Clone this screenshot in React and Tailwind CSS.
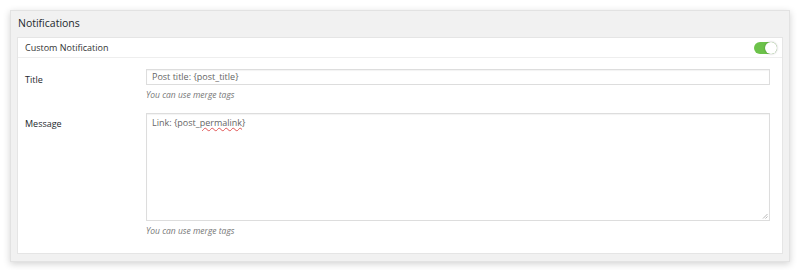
export default function App() {
  return (
    <div className="w-[800px] h-[270px] bg-white p-[10px] font-['Open_Sans','Noto_Sans',sans-serif]">
      <div className="bg-[#f1f1f1] border border-[#e2e2e2] shadow-[0_2px_7px_rgba(0,0,0,0.18)] px-[6px] pb-[7px]">
        <div className="h-[26px] flex items-center pl-[1px] text-[10.5px] text-[#23282d]">Notifications</div>
        <div className="bg-white border border-[#e5e5e5]">
          <div className="h-[20px] flex items-center justify-between pl-[7px] pr-[5px] border-b border-[#eeeeee]">
            <span className="text-[9px] text-[#333]">Custom Notification</span>
            <div className="w-[23px] h-[12px] rounded-full bg-[#6cc24a] relative">
              <div className="absolute right-0 top-0 w-[12px] h-[12px] rounded-full bg-white shadow-[0_0_2px_rgba(0,0,0,0.35)]" />
            </div>
          </div>
          <div className="grid grid-cols-[121px_1fr] pl-[7px] pr-[12px] pt-[11px] pb-[15px] text-[9px]">
            <div className="pt-[4px] text-[#23282d]">Title</div>
            <div>
              <div className="h-[16px] border border-[#dddddd] shadow-[inset_0_1px_1px_rgba(0,0,0,0.05)] flex items-center px-[5px] text-[#666]">
                Post title: {"{post_title}"}
              </div>
              <div className="mt-[4px] italic text-[#777] text-[8.5px]">You can use merge tags</div>
            </div>
            <div className="pt-[4px] mt-[11px] text-[#23282d]">Message</div>
            <div className="mt-[11px]">
              <div className="relative h-[108px] border border-[#dddddd] shadow-[inset_0_1px_1px_rgba(0,0,0,0.05)] px-[5px] pt-[2px] text-[#666]">
                Link: {"{post_"}
                <span className="underline decoration-wavy decoration-[#e05555] decoration-[0.5px] underline-offset-[1px]">permalink</span>
                {"}"}
                <svg className="absolute right-[1px] bottom-[1px]" width="6" height="6" viewBox="0 0 6 6">
                  <path d="M5.5 1L1 5.5M5.5 3.5L3.5 5.5" stroke="#999" strokeWidth="0.7" />
                </svg>
              </div>
              <div className="mt-[4px] italic text-[#777] text-[8.5px]">You can use merge tags</div>
            </div>
          </div>
        </div>
      </div>
    </div>
  );
}
